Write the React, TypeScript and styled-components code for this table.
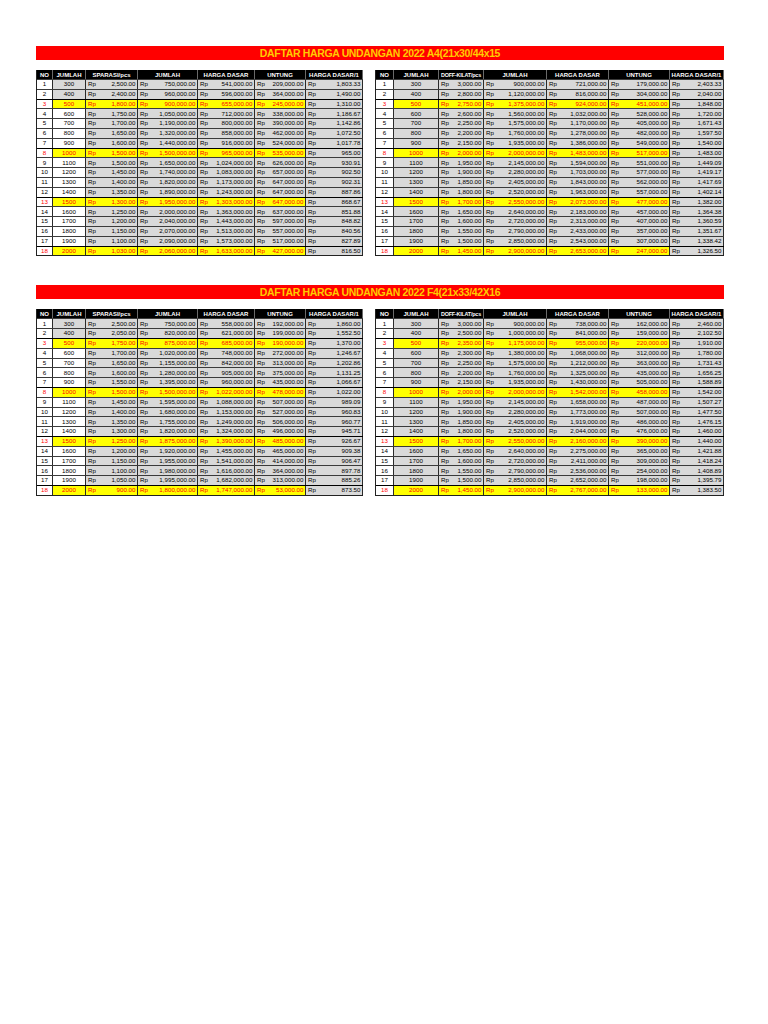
import React from 'react';
import styled, { createGlobalStyle } from 'styled-components';

const GlobalStyle = createGlobalStyle`
  html, body {
    margin: 0;
    padding: 0;
    background: #ffffff;
  }
  body {
    font-family: "Liberation Sans", Arial, sans-serif;
    color: #000;
  }
`;

const StyledPage = styled.div`
  width: 768px;
  min-height: 1024px;
  padding: 46px 0 0 36px;
  box-sizing: border-box;
`;

const StyledSection = styled.section`
  width: 688px;
  margin-bottom: 29px;
`;

const StyledBanner = styled.div`
  height: 14px;
  background: #ff0000;
  color: #ffcc00;
  font-weight: bold;
  font-size: 10.5px;
  letter-spacing: -0.35px;
  display: flex;
  align-items: center;
  justify-content: center;
  white-space: nowrap;
`;

const StyledTables = styled.div`
  display: flex;
  gap: 12px;
  margin-top: 10px;
`;

const StyledSheet = styled.div<{ $width: number }>`
  width: ${p => p.$width}px;
  border-left: 1px solid #222;
  border-bottom: 1px solid #222;
  box-sizing: border-box;
`;

const StyledHeadRow = styled.div<{ $cols: string }>`
  display: grid;
  grid-template-columns: ${p => p.$cols};
  height: 9px;
  background: #000;
`;

const StyledHeadCell = styled.div<{ $tight?: boolean }>`
  color: #fff;
  font-weight: bold;
  font-size: ${p => (p.$tight ? '5.4px' : '6px')};
  letter-spacing: ${p => (p.$tight ? '-0.2px' : '0')};
  display: flex;
  align-items: center;
  justify-content: center;
  white-space: nowrap;
  overflow: hidden;
  border-right: 1px solid #6a6a6a;
`;

const StyledRow = styled.div<{ $cols: string; $mark?: boolean }>`
  display: grid;
  grid-template-columns: ${p => p.$cols};
  height: 9.8px;
  box-sizing: border-box;
  border-top: ${p => (p.$mark ? '1px solid #000' : '1px solid #3a3a3a')};
`;

type Tone = 'white' | 'gray' | 'yellow';

const toneBg: Record<Tone, string> = {
  white: '#ffffff',
  gray: '#d9d9d9',
  yellow: '#ffff00',
};

const StyledCell = styled.div<{ $tone: Tone; $red?: boolean }>`
  background: ${p => toneBg[p.$tone]};
  color: ${p => (p.$red ? '#ff0000' : '#000')};
  font-size: 6.2px;
  line-height: 1;
  display: flex;
  align-items: center;
  justify-content: center;
  white-space: nowrap;
  overflow: hidden;
  border-right: 1px solid #2a2a2a;
  box-sizing: border-box;
`;

const StyledMoneyCell = styled(StyledCell)`
  justify-content: space-between;
  padding: 0 1.5px 0 2px;
`;

type SheetData = {
  label: string;
  width: number;
  cols: string;
  grayCount: boolean;
  rows: string[];
};

const MARKED = [3, 8, 13, 18];

const Sheet: React.FC<{ data: SheetData }> = ({ data }) => {
  const heads = ['NO', 'JUMLAH', data.label, 'JUMLAH', 'HARGA DASAR', 'UNTUNG', 'HARGA DASAR/1'];
  return (
    <StyledSheet $width={data.width}>
      <StyledHeadRow $cols={data.cols}>
        {heads.map((h, i) => (
          <StyledHeadCell key={i} $tight={h.startsWith('DOFF')}>{h}</StyledHeadCell>
        ))}
      </StyledHeadRow>
      {data.rows.map((line, i) => {
        const no = i + 1;
        const mark = MARKED.includes(no);
        const [qty, ...money] = line.split(' ');
        const qtyTone: Tone = mark ? 'yellow' : data.grayCount || no <= 2 ? 'gray' : 'white';
        return (
          <StyledRow key={no} $cols={data.cols} $mark={mark}>
            <StyledCell $tone="white" $red={mark}>{no}</StyledCell>
            <StyledCell $tone={qtyTone} $red={mark}>{qty}</StyledCell>
            {money.map((m, j) => {
              const last = j === money.length - 1;
              const hot = mark && !last;
              return (
                <StyledMoneyCell key={j} $tone={hot ? 'yellow' : 'gray'} $red={hot}>
                  <span>Rp</span>
                  <span>{m}</span>
                </StyledMoneyCell>
              );
            })}
          </StyledRow>
        );
      })}
    </StyledSheet>
  );
};

const LEFT_COLS = '16px 33px 52px 60px 57px 51px 57px';
const RIGHT_COLS = '18px 45px 45px 63px 62px 61px 54px';

const a4Sparasi = [
  '300 2,500.00 750,000.00 541,000.00 209,000.00 1,803.33',
  '400 2,400.00 960,000.00 596,000.00 364,000.00 1,490.00',
  '500 1,800.00 900,000.00 655,000.00 245,000.00 1,310.00',
  '600 1,750.00 1,050,000.00 712,000.00 338,000.00 1,186.67',
  '700 1,700.00 1,190,000.00 800,000.00 390,000.00 1,142.86',
  '800 1,650.00 1,320,000.00 858,000.00 462,000.00 1,072.50',
  '900 1,600.00 1,440,000.00 916,000.00 524,000.00 1,017.78',
  '1000 1,500.00 1,500,000.00 965,000.00 535,000.00 965.00',
  '1100 1,500.00 1,650,000.00 1,024,000.00 626,000.00 930.91',
  '1200 1,450.00 1,740,000.00 1,083,000.00 657,000.00 902.50',
  '1300 1,400.00 1,820,000.00 1,173,000.00 647,000.00 902.31',
  '1400 1,350.00 1,890,000.00 1,243,000.00 647,000.00 887.86',
  '1500 1,300.00 1,950,000.00 1,303,000.00 647,000.00 868.67',
  '1600 1,250.00 2,000,000.00 1,363,000.00 637,000.00 851.88',
  '1700 1,200.00 2,040,000.00 1,443,000.00 597,000.00 848.82',
  '1800 1,150.00 2,070,000.00 1,513,000.00 557,000.00 840.56',
  '1900 1,100.00 2,090,000.00 1,573,000.00 517,000.00 827.89',
  '2000 1,030.00 2,060,000.00 1,633,000.00 427,000.00 816.50',
];

const a4Doff = [
  '300 3,000.00 900,000.00 721,000.00 179,000.00 2,403.33',
  '400 2,800.00 1,120,000.00 816,000.00 304,000.00 2,040.00',
  '500 2,750.00 1,375,000.00 924,000.00 451,000.00 1,848.00',
  '600 2,600.00 1,560,000.00 1,032,000.00 528,000.00 1,720.00',
  '700 2,250.00 1,575,000.00 1,170,000.00 405,000.00 1,671.43',
  '800 2,200.00 1,760,000.00 1,278,000.00 482,000.00 1,597.50',
  '900 2,150.00 1,935,000.00 1,386,000.00 549,000.00 1,540.00',
  '1000 2,000.00 2,000,000.00 1,483,000.00 517,000.00 1,483.00',
  '1100 1,950.00 2,145,000.00 1,594,000.00 551,000.00 1,449.09',
  '1200 1,900.00 2,280,000.00 1,703,000.00 577,000.00 1,419.17',
  '1300 1,850.00 2,405,000.00 1,843,000.00 562,000.00 1,417.69',
  '1400 1,800.00 2,520,000.00 1,963,000.00 557,000.00 1,402.14',
  '1500 1,700.00 2,550,000.00 2,073,000.00 477,000.00 1,382.00',
  '1600 1,650.00 2,640,000.00 2,183,000.00 457,000.00 1,364.38',
  '1700 1,600.00 2,720,000.00 2,313,000.00 407,000.00 1,360.59',
  '1800 1,550.00 2,790,000.00 2,433,000.00 357,000.00 1,351.67',
  '1900 1,500.00 2,850,000.00 2,543,000.00 307,000.00 1,338.42',
  '2000 1,450.00 2,900,000.00 2,653,000.00 247,000.00 1,326.50',
];

const f4Sparasi = [
  '300 2,500.00 750,000.00 558,000.00 192,000.00 1,860.00',
  '400 2,050.00 820,000.00 621,000.00 199,000.00 1,552.50',
  '500 1,750.00 875,000.00 685,000.00 190,000.00 1,370.00',
  '600 1,700.00 1,020,000.00 748,000.00 272,000.00 1,246.67',
  '700 1,650.00 1,155,000.00 842,000.00 313,000.00 1,202.86',
  '800 1,600.00 1,280,000.00 905,000.00 375,000.00 1,131.25',
  '900 1,550.00 1,395,000.00 960,000.00 435,000.00 1,066.67',
  '1000 1,500.00 1,500,000.00 1,022,000.00 478,000.00 1,022.00',
  '1100 1,450.00 1,595,000.00 1,088,000.00 507,000.00 989.09',
  '1200 1,400.00 1,680,000.00 1,153,000.00 527,000.00 960.83',
  '1300 1,350.00 1,755,000.00 1,249,000.00 506,000.00 960.77',
  '1400 1,300.00 1,820,000.00 1,324,000.00 496,000.00 945.71',
  '1500 1,250.00 1,875,000.00 1,390,000.00 485,000.00 926.67',
  '1600 1,200.00 1,920,000.00 1,455,000.00 465,000.00 909.38',
  '1700 1,150.00 1,955,000.00 1,541,000.00 414,000.00 906.47',
  '1800 1,100.00 1,980,000.00 1,616,000.00 364,000.00 897.78',
  '1900 1,050.00 1,995,000.00 1,682,000.00 313,000.00 885.26',
  '2000 900.00 1,800,000.00 1,747,000.00 53,000.00 873.50',
];

const f4Doff = [
  '300 3,000.00 900,000.00 738,000.00 162,000.00 2,460.00',
  '400 2,500.00 1,000,000.00 841,000.00 159,000.00 2,102.50',
  '500 2,350.00 1,175,000.00 955,000.00 220,000.00 1,910.00',
  '600 2,300.00 1,380,000.00 1,068,000.00 312,000.00 1,780.00',
  '700 2,250.00 1,575,000.00 1,212,000.00 363,000.00 1,731.43',
  '800 2,200.00 1,760,000.00 1,325,000.00 435,000.00 1,656.25',
  '900 2,150.00 1,935,000.00 1,430,000.00 505,000.00 1,588.89',
  '1000 2,000.00 2,000,000.00 1,542,000.00 458,000.00 1,542.00',
  '1100 1,950.00 2,145,000.00 1,658,000.00 487,000.00 1,507.27',
  '1200 1,900.00 2,280,000.00 1,773,000.00 507,000.00 1,477.50',
  '1300 1,850.00 2,405,000.00 1,919,000.00 486,000.00 1,476.15',
  '1400 1,800.00 2,520,000.00 2,044,000.00 476,000.00 1,460.00',
  '1500 1,700.00 2,550,000.00 2,160,000.00 390,000.00 1,440.00',
  '1600 1,650.00 2,640,000.00 2,275,000.00 365,000.00 1,421.88',
  '1700 1,600.00 2,720,000.00 2,411,000.00 309,000.00 1,418.24',
  '1800 1,550.00 2,790,000.00 2,536,000.00 254,000.00 1,408.89',
  '1900 1,500.00 2,850,000.00 2,652,000.00 198,000.00 1,395.79',
  '2000 1,450.00 2,900,000.00 2,767,000.00 133,000.00 1,383.50',
];

const sections = [
  {
    title: 'DAFTAR HARGA UNDANGAN 2022 A4(21x30/44x15',
    left: a4Sparasi,
    right: a4Doff,
  },
  {
    title: 'DAFTAR HARGA UNDANGAN 2022 F4(21x33/42X16',
    left: f4Sparasi,
    right: f4Doff,
  },
];

export default function App() {
  return (
    <>
      <GlobalStyle />
      <StyledPage>
        {sections.map(s => (
          <StyledSection key={s.title}>
            <StyledBanner>{s.title}</StyledBanner>
            <StyledTables>
              <Sheet
                data={{ label: 'SPARASI/pcs', width: 327, cols: LEFT_COLS, grayCount: false, rows: s.left }}
              />
              <Sheet
                data={{ label: 'DOFF-KILAT/pcs', width: 349, cols: RIGHT_COLS, grayCount: true, rows: s.right }}
              />
            </StyledTables>
          </StyledSection>
        ))}
      </StyledPage>
    </>
  );
}
